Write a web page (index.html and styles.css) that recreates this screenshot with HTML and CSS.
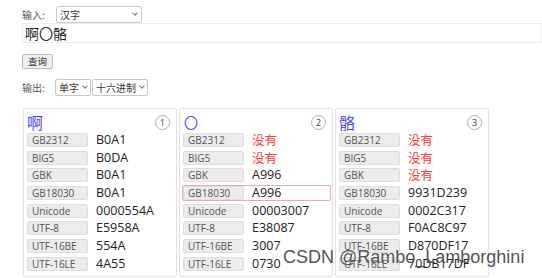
FILE: index.html
```html
<!DOCTYPE html>
<html lang="zh">
<head>
<meta charset="utf-8">
<link rel="stylesheet" href="styles.css">
</head>
<body>
<div class="page">
  <div class="line">
    <span class="lbl">输入:</span>
    <span class="sel sel-input"><select><option>汉字</option></select></span>
  </div>
  <input class="text-in" type="text" value="啊〇骼">
  <button class="btn">查询</button>
  <div class="line out-line">
    <span class="lbl">输出:</span>
    <span class="sel sel-single"><select><option>单字</option></select></span>
    <span class="sel sel-hex"><select><option>十六进制</option></select></span>
  </div>
  <div class="cards">
    <div class="card">
      <div class="card-head"><span class="ch">啊</span><span class="num">1</span></div>
      <div class="row"><span class="key">GB2312</span><span class="val">B0A1</span></div>
      <div class="row"><span class="key">BIG5</span><span class="val">B0DA</span></div>
      <div class="row"><span class="key">GBK</span><span class="val">B0A1</span></div>
      <div class="row"><span class="key">GB18030</span><span class="val">B0A1</span></div>
      <div class="row"><span class="key">Unicode</span><span class="val">0000554A</span></div>
      <div class="row"><span class="key">UTF-8</span><span class="val">E5958A</span></div>
      <div class="row"><span class="key">UTF-16BE</span><span class="val">554A</span></div>
      <div class="row"><span class="key">UTF-16LE</span><span class="val">4A55</span></div>
    </div>
    <div class="card">
      <div class="card-head"><span class="ch ch-circle">〇</span><span class="num">2</span></div>
      <div class="row"><span class="key">GB2312</span><span class="val none">没有</span></div>
      <div class="row"><span class="key">BIG5</span><span class="val none">没有</span></div>
      <div class="row"><span class="key">GBK</span><span class="val">A996</span></div>
      <div class="row active"><span class="key">GB18030</span><span class="val">A996</span></div>
      <div class="row"><span class="key">Unicode</span><span class="val">00003007</span></div>
      <div class="row"><span class="key">UTF-8</span><span class="val">E38087</span></div>
      <div class="row"><span class="key">UTF-16BE</span><span class="val">3007</span></div>
      <div class="row"><span class="key">UTF-16LE</span><span class="val">0730</span></div>
    </div>
    <div class="card">
      <div class="card-head"><span class="ch">骼</span><span class="num">3</span></div>
      <div class="row"><span class="key">GB2312</span><span class="val none">没有</span></div>
      <div class="row"><span class="key">BIG5</span><span class="val none">没有</span></div>
      <div class="row"><span class="key">GBK</span><span class="val none">没有</span></div>
      <div class="row"><span class="key">GB18030</span><span class="val">9931D239</span></div>
      <div class="row"><span class="key">Unicode</span><span class="val">0002C317</span></div>
      <div class="row"><span class="key">UTF-8</span><span class="val">F0AC8C97</span></div>
      <div class="row"><span class="key">UTF-16BE</span><span class="val">D870DF17</span></div>
      <div class="row"><span class="key">UTF-16LE</span><span class="val">70DB17DF</span></div>
    </div>
  </div>
  <div class="watermark">CSDN @Rambo_Lamborghini</div>
</div>
</body>
</html>
```

FILE: styles.css
```css
html, body {
  margin: 0;
  padding: 0;
  background: #fff;
}
.page {
  position: relative;
  width: 542px;
  height: 278px;
  padding: 6px 0 0 22px;
  box-sizing: border-box;
  font-family: "Open Sans", "Noto Sans CJK SC", sans-serif;
  color: #333;
  overflow: hidden;
}
.line {
  display: flex;
  align-items: center;
  height: 17px;
}
.lbl {
  font-family: "Noto Sans CJK SC", sans-serif;
  font-size: 10px;
  line-height: 17px;
  color: #555;
  width: 34px;
}
.out-line .lbl {
  width: 33px;
}
.sel {
  position: relative;
  display: flex;
  height: 17px;
}
.sel select {
  appearance: none;
  -webkit-appearance: none;
  display: block;
  height: 17px;
  box-sizing: border-box;
  border: 1px solid #c8c8c8;
  border-radius: 2px;
  background: #fff;
  font-family: "Noto Sans CJK SC", sans-serif;
  font-size: 10px;
  color: #333;
  padding: 0 0 0 3px;
  margin: 0;
  outline: none;
}
.sel::after {
  content: "";
  position: absolute;
  top: 5px;
  width: 3px;
  height: 3px;
  border-right: 1px solid #777;
  border-bottom: 1px solid #777;
  transform: rotate(45deg);
  pointer-events: none;
}
.sel-input select { width: 86px; }
.sel-input::after { left: 77px; }
.sel-single select { width: 36px; }
.sel-single::after { left: 28px; }
.sel-hex { margin-left: 1px; }
.sel-hex select { width: 56px; }
.sel-hex::after { left: 48px; }
.text-in {
  display: block;
  width: 520px;
  height: 20px;
  box-sizing: border-box;
  margin: 0;
  border: 1px solid #ececec;
  padding: 0 2px;
  font-family: "Noto Sans CJK SC", sans-serif;
  font-size: 14px;
  color: #222;
  outline: none;
}
.btn {
  display: block;
  margin: 11px 0 0 0;
  width: 31px;
  height: 15px;
  box-sizing: border-box;
  padding: 0;
  border: 1px solid #bdbdbd;
  border-radius: 2px;
  background: #efefef;
  font-family: "Noto Sans CJK SC", sans-serif;
  font-size: 9.5px;
  line-height: 13px;
  color: #333;
}
.out-line {
  margin-top: 10px;
}
.cards {
  display: flex;
  gap: 2px;
  margin: 12px 0 0 1px;
}
.card {
  width: 154px;
  height: 169px;
  box-sizing: border-box;
  border: 1px solid #e2e2e2;
  border-radius: 3px;
  padding: 3px 1px 0 2px;
  box-shadow: 0 0 2px rgba(0, 0, 0, 0.06);
}
.card-head {
  display: flex;
  justify-content: space-between;
  align-items: center;
  height: 20px;
  padding: 0 5px 0 1px;
}
.ch {
  font-family: "Noto Sans CJK SC", sans-serif;
  font-size: 16px;
  line-height: 18px;
  color: #4a4af0;
}
.ch-circle {
  font-size: 14px;
  padding-left: 1px;
}
.num {
  width: 13px;
  height: 13px;
  border: 1px solid #b0b0b0;
  border-radius: 50%;
  font-size: 9.5px;
  line-height: 13px;
  text-align: center;
  color: #444;
}
.row {
  display: flex;
  align-items: center;
  height: 16px;
  box-sizing: border-box;
  margin-bottom: 1.7px;
  border: 1px solid transparent;
  border-radius: 2px;
}
.row.active {
  border-color: #f2a7a7;
}
.key {
  display: block;
  width: 61px;
  height: 14px;
  box-sizing: border-box;
  border: 1px solid #dedede;
  border-radius: 2px;
  background: #ececec;
  font-size: 10px;
  line-height: 12px;
  padding-left: 4px;
  color: #555;
}
.val {
  margin-left: 8px;
  font-size: 12.5px;
  line-height: 14px;
  color: #222;
}
.val.none {
  font-family: "Noto Sans CJK SC", sans-serif;
  color: #ff3a3a;
}
.watermark {
  position: absolute;
  left: 283px;
  top: 247px;
  font-family: "Liberation Sans", sans-serif;
  font-size: 18px;
  color: #555;
  white-space: nowrap;
}
```
